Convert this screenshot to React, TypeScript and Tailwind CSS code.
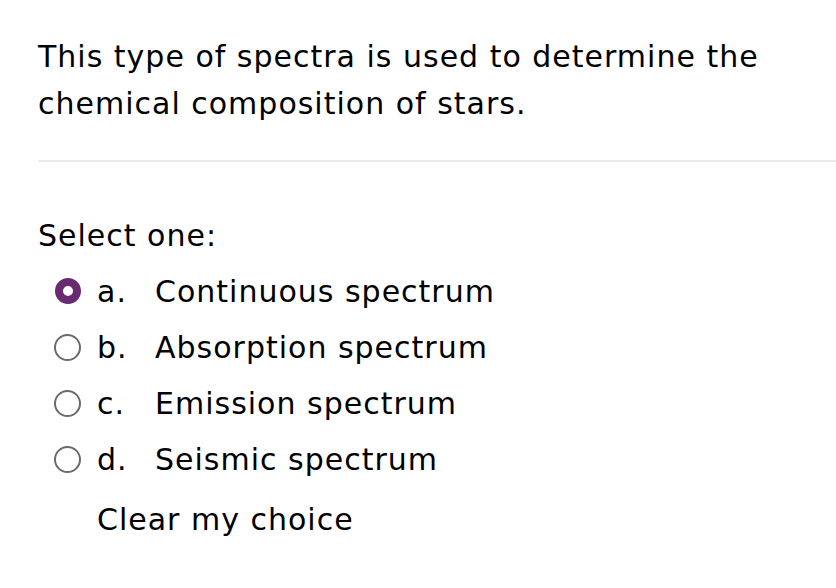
import React from "react";

const options = [
  { l: "a.", t: "Continuous spectrum", sel: true },
  { l: "b.", t: "Absorption spectrum", sel: false },
  { l: "c.", t: "Emission spectrum", sel: false },
  { l: "d.", t: "Seismic spectrum", sel: false },
];

export default function App() {
  return (
    <div
      className="w-[836px] h-[588px] bg-white text-black overflow-hidden tracking-[1px]"
      style={{ fontFamily: '"DejaVu Sans", Verdana, sans-serif' }}
    >
      <div className="pl-[38px] pt-[33px] pr-[40px] text-[30px] leading-[47px]">
        This type of spectra is used to determine the chemical composition of stars.
      </div>
      <div className="ml-[38px] mt-[33px] h-[2px] bg-[#e9e9ee]" />
      <div className="pl-[38px] pt-[50px] text-[30px] leading-[47px]">Select one:</div>
      <div className="pl-[54px] mt-[4px] flex flex-col">
        {options.map((o) => (
          <div key={o.l} className="flex items-center h-[56px] text-[30px]">
            <span className="w-[27px] flex justify-center shrink-0">
              {o.sel ? (
                <span className="w-[26px] h-[26px] rounded-full border-[8px] border-[#6a2a72] bg-white" />
              ) : (
                <span className="w-[27px] h-[27px] rounded-full border-[2px] border-[#6b6b6b] bg-white" />
              )}
            </span>
            <span className="ml-[16px] w-[58px]">{o.l}</span>
            <span>{o.t}</span>
          </div>
        ))}
      </div>
      <div className="pl-[97px] mt-[9px] text-[30px] leading-[47px]">Clear my choice</div>
    </div>
  );
}
